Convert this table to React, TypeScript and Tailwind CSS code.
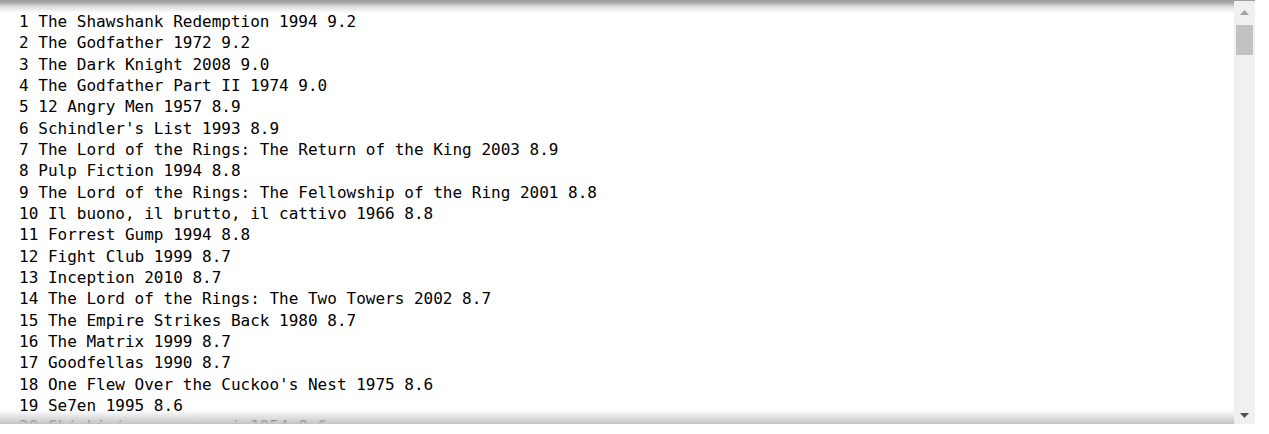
import React from "react";

const movies: string[] = [
  "1 The Shawshank Redemption 1994 9.2",
  "2 The Godfather 1972 9.2",
  "3 The Dark Knight 2008 9.0",
  "4 The Godfather Part II 1974 9.0",
  "5 12 Angry Men 1957 8.9",
  "6 Schindler's List 1993 8.9",
  "7 The Lord of the Rings: The Return of the King 2003 8.9",
  "8 Pulp Fiction 1994 8.8",
  "9 The Lord of the Rings: The Fellowship of the Ring 2001 8.8",
  "10 Il buono, il brutto, il cattivo 1966 8.8",
  "11 Forrest Gump 1994 8.8",
  "12 Fight Club 1999 8.7",
  "13 Inception 2010 8.7",
  "14 The Lord of the Rings: The Two Towers 2002 8.7",
  "15 The Empire Strikes Back 1980 8.7",
  "16 The Matrix 1999 8.7",
  "17 Goodfellas 1990 8.7",
  "18 One Flew Over the Cuckoo's Nest 1975 8.6",
  "19 Se7en 1995 8.6",
  "20 Shichinin no samurai 1954 8.6",
];

export default function App() {
  return (
    <div className="w-[1269px] h-[434px] bg-white overflow-hidden">
      <div className="relative flex h-[424px] w-[1255px]">
        <div className="relative flex-1 overflow-hidden">
          <div className="pl-[19px] pt-[11px] font-['DejaVu_Sans_Mono',monospace] text-[16px] leading-[21.33px] text-black whitespace-pre">
            {movies.map((m) => (
              <div key={m}>{m}</div>
            ))}
          </div>
          <div className="absolute inset-x-0 top-0 h-[13px] bg-gradient-to-b from-[#8a8a8a] via-[#dcdcdc] to-transparent" />
          <div className="absolute inset-x-0 bottom-0 h-[14px] bg-gradient-to-t from-[#c4c4c4] to-transparent" />
        </div>
        <div className="flex w-[21px] flex-col bg-[#f0f0f0] pt-[4px]">
          <div className="flex h-[17px] items-center justify-center">
            <svg width="9" height="5" viewBox="0 0 9 5">
              <polygon points="4.5,0 9,5 0,5" fill="#a3a3a3" />
            </svg>
          </div>
          <div className="mx-[2px] mt-[4px] h-[30px] bg-[#c1c1c1]" />
          <div className="flex-1" />
          <div className="flex h-[17px] items-center justify-center">
            <svg width="9" height="5" viewBox="0 0 9 5">
              <polygon points="0,0 9,0 4.5,5" fill="#505050" />
            </svg>
          </div>
        </div>
        <div className="absolute inset-x-0 top-0 h-[1px] bg-[#a0a0a0]" />
      </div>
    </div>
  );
}
